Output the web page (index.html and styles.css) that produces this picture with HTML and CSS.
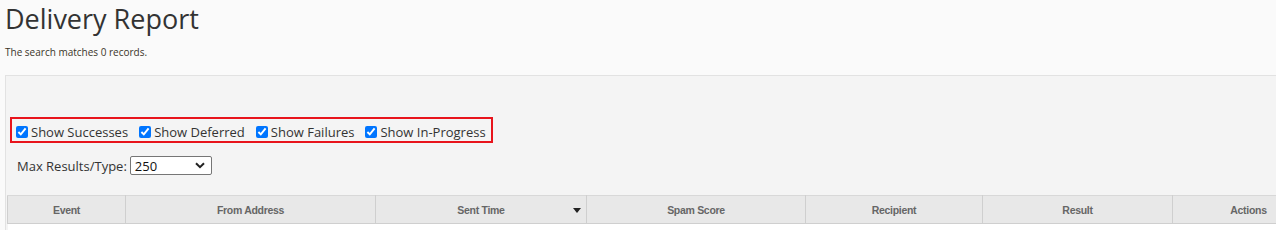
FILE: index.html
```html
<!DOCTYPE html>
<html>
<head>
<meta charset="utf-8">
<link rel="stylesheet" href="styles.css">
</head>
<body>
<h1 class="title">Delivery Report</h1>
<p class="summary">The search matches 0 records.</p>
<div class="panel">
  <div class="filters">
    <label class="filter"><input type="checkbox" checked> Show Successes</label>
    <label class="filter"><input type="checkbox" checked> Show Deferred</label>
    <label class="filter"><input type="checkbox" checked> Show Failures</label>
    <label class="filter"><input type="checkbox" checked> Show In-Progress</label>
  </div>
  <div class="maxrow">
    <span class="maxlabel">Max Results/Type:</span>
    <div class="select"><span>250</span>
      <svg class="chev" width="10" height="7" viewBox="0 0 10 7"><path d="M1 1.2 L5 5.2 L9 1.2" fill="none" stroke="#222" stroke-width="2"/></svg>
    </div>
  </div>
  <table class="grid">
    <thead>
      <tr>
        <th class="c1">Event</th>
        <th class="c2">From Address</th>
        <th class="c3">Sent Time<span class="sort"></span></th>
        <th class="c4">Spam Score</th>
        <th class="c5">Recipient</th>
        <th class="c6">Result</th>
        <th class="c7">Actions</th>
      </tr>
    </thead>
    <tbody>
      <tr><td colspan="7" class="empty">No records found.</td></tr>
    </tbody>
  </table>
</div>
</body>
</html>
```
FILE: styles.css
```css
html, body {
  margin: 0;
  padding: 0;
  background: #fafafa;
  overflow: hidden;
  width: 1276px;
  height: 230px;
}
body {
  font-family: "Open Sans", "Liberation Sans", sans-serif;
  color: #333;
}
.title {
  margin: 0;
  padding: 1px 0 0 5px;
  font-size: 27px;
  font-weight: 400;
  line-height: 36px;
  color: #333;
}
.summary {
  margin: 8px 0 0 5px;
  font-size: 10px;
  line-height: 14px;
  color: #3b3529;
}
.panel {
  margin: 16px 0 0 5px;
  width: 1400px;
  height: 200px;
  border: 1px solid #e2e2e2;
  background: #f4f4f4;
  padding: 41px 0 0 1px;
  box-sizing: border-box;
}
.filters {
  display: inline-flex;
  align-items: center;
  margin-left: 3px;
  height: 26px;
  box-sizing: border-box;
  border: 2px solid #e8141c;
  padding: 4px 5px 0 4px;
  gap: 11px;
  font-size: 13px;
  color: #333;
}
.filter {
  display: inline-flex;
  align-items: center;
  gap: 3px;
  white-space: nowrap;
}
.filter input {
  margin: 0;
  width: 12px;
  height: 12px;
  accent-color: #0075ff;
}
.maxrow {
  display: flex;
  align-items: center;
  margin: 13px 0 0 10px;
  font-size: 13px;
  gap: 3px;
}
.select {
  display: flex;
  align-items: center;
  justify-content: space-between;
  width: 82px;
  height: 19px;
  box-sizing: border-box;
  border: 1px solid #767676;
  border-radius: 2px;
  background: #fff;
  padding: 0 6px 0 4px;
  font-size: 13px;
  color: #111;
}
.grid {
  margin-top: 20px;
  margin-left: 0;
  border-collapse: collapse;
  table-layout: fixed;
  width: 1310px;
  font-family: "Liberation Sans", Arial, sans-serif;
}
.grid th {
  height: 27px;
  padding: 0;
  background: #e8e8e8;
  border: 1px solid #cfcfcf;
  border-top-color: #d8d8d8;
  font-size: 10.5px;
  letter-spacing: -0.3px;
  font-weight: bold;
  color: #666;
  text-align: center;
  position: relative;
}
.c1 { width: 117px; }
.c2 { width: 249px; }
.c3 { width: 210px; }
.c4 { width: 218px; }
.c5 { width: 176px; }
.c6 { width: 189px; }
.c7 { width: 151px; }
.sort {
  position: absolute;
  right: 5px;
  top: 12px;
  width: 0;
  height: 0;
  border-left: 4px solid transparent;
  border-right: 4px solid transparent;
  border-top: 5px solid #222;
}
.grid td {
  background: #fff;
  height: 24px;
  font-size: 11px;
  color: #666;
  text-align: center;
  padding: 0;
}
.empty {
  padding-top: 2px;
}
```
